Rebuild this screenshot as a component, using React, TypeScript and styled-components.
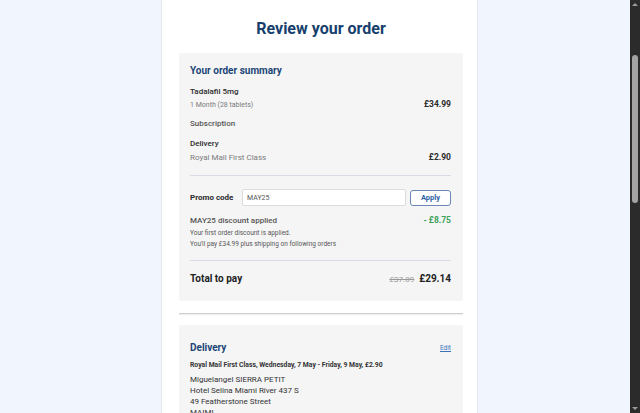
import styled, { createGlobalStyle } from "styled-components";

const GlobalStyle = createGlobalStyle`
  html, body {
    margin: 0;
    padding: 0;
    height: 100%;
    overflow: hidden;
  }
  body {
    font-family: Roboto, "Liberation Sans", Arial, sans-serif;
    background: #f0f5fe;
  }
`;

const Screen = styled.div`
  display: flex;
  width: 640px;
  height: 413px;
  overflow: hidden;
`;

const Main = styled.div`
  flex: 1;
  height: 100%;
  overflow: hidden;
`;

const Panel = styled.div`
  width: 317px;
  margin-left: 161px;
  min-height: 100%;
  background: #fff;
  border-left: 1px solid #e4e7ee;
  border-right: 1px solid #e4e7ee;
  padding: 19px 14px 0 17px;
  box-sizing: border-box;
`;

const Title = styled.h1`
  margin: 0 0 14px;
  text-align: center;
  font-size: 16px;
  font-weight: 700;
  color: #173f6e;
  line-height: 20px;
`;

const Card = styled.section<{ $pad?: string }>`
  background: #f5f5f6;
  border-radius: 3px;
  padding: ${(p) => p.$pad || "11px 12px 17px 11px"};
`;

const CardTitle = styled.h2`
  margin: 0;
  font-size: 10px;
  font-weight: 700;
  color: #1d4677;
  line-height: 13px;
`;

const Row = styled.div<{ $mt?: number }>`
  display: flex;
  justify-content: space-between;
  align-items: baseline;
  margin-top: ${(p) => p.$mt ?? 0}px;
`;

const ItemName = styled.div<{ $mt?: number; $muted?: boolean }>`
  font-size: 8px;
  font-weight: 500;
  color: ${(p) => (p.$muted ? "#555" : "#2b2b2b")};
  line-height: 11px;
  margin-top: ${(p) => p.$mt ?? 0}px;
`;

const Muted = styled.span<{ $size?: number }>`
  font-size: ${(p) => p.$size ?? 8}px;
  color: #7b7b7b;
  line-height: 11px;
`;

const Price = styled.span`
  font-size: 8.5px;
  font-weight: 700;
  color: #2b2b2b;
`;

const Divider = styled.hr<{ $m?: string }>`
  border: 0;
  height: 1px;
  background: #d9d9ea;
  margin: ${(p) => p.$m || "0"};
`;

const PromoRow = styled.div`
  display: flex;
  align-items: center;
  margin-top: 13px;
`;

const PromoLabel = styled.label`
  font-size: 8px;
  font-weight: 700;
  color: #2b2b2b;
  width: 52px;
`;

const PromoInput = styled.input`
  width: 164px;
  height: 17px;
  box-sizing: border-box;
  border: 1px solid #dcdcdc;
  border-radius: 2px;
  background: #fff;
  padding: 0 4px;
  font-family: inherit;
  font-size: 7px;
  color: #555;
  outline: none;
`;

const ApplyButton = styled.button`
  margin-left: 4px;
  width: 41px;
  height: 16px;
  box-sizing: border-box;
  border: 1px solid #6b87b2;
  border-radius: 3px;
  background: #fff;
  color: #2c5fa6;
  font-family: inherit;
  font-size: 7.5px;
  font-weight: 700;
  padding: 0;
`;

const DiscountLabel = styled.span`
  font-size: 8px;
  font-weight: 500;
  color: #555;
`;

const DiscountValue = styled.span`
  font-size: 8.5px;
  font-weight: 700;
  color: #3fa35b;
`;

const Note = styled.div<{ $mt?: number }>`
  font-size: 6.5px;
  color: #555;
  line-height: 11px;
  margin-top: ${(p) => p.$mt ?? 0}px;
`;

const TotalLabel = styled.span`
  font-size: 10px;
  font-weight: 700;
  color: #222;
`;

const TotalPrices = styled.span`
  display: flex;
  align-items: baseline;
  gap: 5px;
`;

const OldPrice = styled.s`
  font-size: 8px;
  color: #999;
`;

const NewPrice = styled.span`
  font-size: 10px;
  font-weight: 700;
  color: #222;
`;

const Separator = styled.div`
  height: 1px;
  background: #cfcfcf;
  box-shadow: 0 1px 1px rgba(0, 0, 0, 0.08);
  margin: 12px 0 11px;
`;

const HeaderRow = styled.div`
  display: flex;
  justify-content: space-between;
  align-items: center;
`;

const EditLink = styled.a`
  font-size: 6.5px;
  color: #3b6fb8;
  text-decoration: underline;
`;

const Shipping = styled.div`
  font-size: 6.8px;
  font-weight: 700;
  color: #333;
  margin-top: 6px;
  line-height: 11px;
`;

const Address = styled.div`
  margin-top: 3px;
  font-size: 8px;
  color: #333;
  line-height: 11px;
`;

const ScrollTrack = styled.div`
  width: 10px;
  height: 100%;
  background: #2b2b2b;
  display: flex;
  flex-direction: column;
  align-items: center;
`;

const Arrow = styled.div<{ $down?: boolean }>`
  width: 0;
  height: 0;
  margin: 3px 0;
  border-left: 3px solid transparent;
  border-right: 3px solid transparent;
  ${(p) =>
    p.$down
      ? "border-top: 3px solid #9a9a9a;"
      : "border-bottom: 3px solid #9a9a9a;"}
`;

const Gap = styled.div<{ $h?: number }>`
  height: ${(p) => (p.$h !== undefined ? `${p.$h}px` : "auto")};
  flex: ${(p) => (p.$h !== undefined ? "none" : "1")};
`;

const Thumb = styled.div`
  width: 6px;
  height: 148px;
  border-radius: 3px;
  background: #a3a3a3;
`;

export default function App() {
  return (
    <>
      <GlobalStyle />
      <Screen>
        <Main>
          <Panel>
            <Title>Review your order</Title>
            <Card>
              <CardTitle>Your order summary</CardTitle>
              <ItemName $mt={9}>Tadalafil 5mg</ItemName>
              <Row $mt={2}>
                <Muted $size={7}>1 Month (28 tablets)</Muted>
                <Price>£34.99</Price>
              </Row>
              <ItemName $mt={7} $muted>
                Subscription
              </ItemName>
              <ItemName $mt={9}>Delivery</ItemName>
              <Row $mt={3}>
                <Muted>Royal Mail First Class</Muted>
                <Price>£2.90</Price>
              </Row>
              <Divider $m="12px 0 0" />
              <PromoRow>
                <PromoLabel>Promo code</PromoLabel>
                <PromoInput defaultValue="MAY25" />
                <ApplyButton>Apply</ApplyButton>
              </PromoRow>
              <Row $mt={9}>
                <DiscountLabel>MAY25 discount applied</DiscountLabel>
                <DiscountValue>- £8.75</DiscountValue>
              </Row>
              <Note $mt={3}>Your first order discount is applied.</Note>
              <Note>You'll pay £34.99 plus shipping on following orders</Note>
              <Divider $m="10px 0 0" />
              <Row $mt={12}>
                <TotalLabel>Total to pay</TotalLabel>
                <TotalPrices>
                  <OldPrice>£37.89</OldPrice>
                  <NewPrice>£29.14</NewPrice>
                </TotalPrices>
              </Row>
            </Card>
            <Separator />
            <Card $pad="16px 12px 14px 11px">
              <HeaderRow>
                <CardTitle>Delivery</CardTitle>
                <EditLink>Edit</EditLink>
              </HeaderRow>
              <Shipping>Royal Mail First Class, Wednesday, 7 May - Friday, 9 May, £2.90</Shipping>
              <Address>
                Miguelangel SIERRA PETIT
                <br />
                Hotel Selina Miami River 437 S
                <br />
                49 Featherstone Street
                <br />
                MAIMI
              </Address>
            </Card>
          </Panel>
        </Main>
        <ScrollTrack>
          <Arrow />
          <Gap $h={46} />
          <Thumb />
          <Gap />
          <Arrow $down />
        </ScrollTrack>
      </Screen>
    </>
  );
}
